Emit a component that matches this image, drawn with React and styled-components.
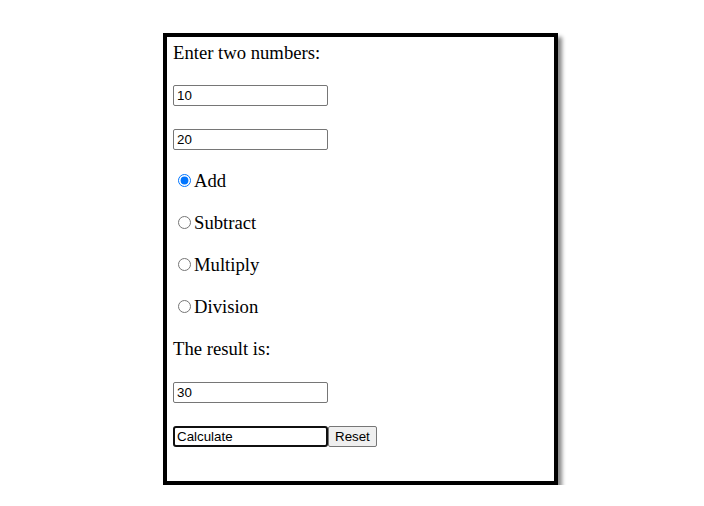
import React, { useState } from "react";
import styled, { createGlobalStyle } from "styled-components";

const GlobalStyle = createGlobalStyle`
  body {
    margin: 0;
    background: #fff;
    font-family: "Liberation Serif", "Times New Roman", serif;
  }
`;

const Page = styled.div`
  padding: 33px 0 0 163px;
`;

const Card = styled.form`
  width: 395px;
  height: 452px;
  box-sizing: border-box;
  border: 4px solid #000;
  box-shadow: 4px 4px 4px #8a8a8a;
  padding: 5px 6px;
  display: flex;
  flex-direction: column;
  align-items: flex-start;
  color: #000;
  font-size: 18.67px;
`;

const Line = styled.div`
  line-height: 21px;
  height: 21px;
  margin-top: ${(p) => p.$gap || 0}px;
`;

const Field = styled.input`
  box-sizing: border-box;
  width: 155px;
  height: 21px;
  margin: ${(p) => p.$gap || 0}px 0 0 0;
  padding: 1px 3px;
  border: 1px solid #767676;
  border-radius: 2px;
  font-family: "Liberation Sans", Arial, sans-serif;
  font-size: 13.33px;
  color: #000;
  background: #fff;
  outline: none;
`;

const Option = styled.label`
  display: block;
  line-height: 21px;
  height: 21px;
  margin-top: ${(p) => p.$gap}px;
  white-space: nowrap;
`;

const Radio = styled.input`
  width: 13px;
  height: 13px;
  margin: 3px 3px 0 5px;
  accent-color: #0075ff;
`;

const Actions = styled.div`
  display: flex;
  margin-top: 23px;
`;

const FocusField = styled(Field)`
  border: 2px solid #101010;
  border-radius: 3px;
  padding: 0 2px;
`;

const Button = styled.button`
  box-sizing: border-box;
  height: 21px;
  padding: 1px 6px;
  border: 1px solid #767676;
  border-radius: 2px;
  background: #efefef;
  font-family: "Liberation Sans", Arial, sans-serif;
  font-size: 13.33px;
  color: #000;
`;

const ops = ["Add", "Subtract", "Multiply", "Division"];

export default function App() {
  const [a, setA] = useState("10");
  const [b, setB] = useState("20");
  const [op, setOp] = useState("Add");
  const [result, setResult] = useState("30");

  const calc = () => {
    const x = parseFloat(a);
    const y = parseFloat(b);
    const r =
      op === "Add" ? x + y : op === "Subtract" ? x - y : op === "Multiply" ? x * y : x / y;
    setResult(String(r));
  };

  const reset = () => {
    setA("");
    setB("");
    setResult("");
    setOp("Add");
  };

  return (
    <Page>
      <GlobalStyle />
      <Card onSubmit={(e) => e.preventDefault()}>
        <Line>Enter two numbers:</Line>
        <Field $gap={22} value={a} onChange={(e) => setA(e.target.value)} />
        <Field $gap={23} value={b} onChange={(e) => setB(e.target.value)} />
        {ops.map((name, i) => (
          <Option key={name} $gap={i === 0 ? 20 : 21}>
            <Radio
              type="radio"
              name="op"
              checked={op === name}
              onChange={() => setOp(name)}
            />
            {name}
          </Option>
        ))}
        <Line $gap={21}>The result is:</Line>
        <Field $gap={23} value={result} readOnly />
        <Actions>
          <FocusField type="button" as="input" value="Calculate" readOnly onClick={calc} style={{ textAlign: "left" }} />
          <Button type="button" onClick={reset}>
            Reset
          </Button>
        </Actions>
      </Card>
    </Page>
  );
}
